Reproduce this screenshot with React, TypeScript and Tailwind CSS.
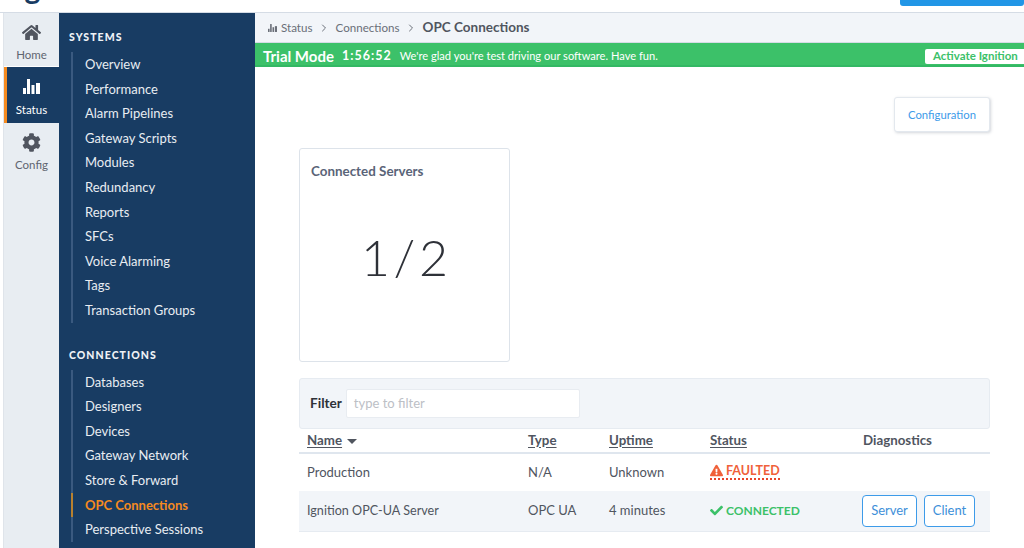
import { ChevronRight } from "lucide-react";
import { FaCheck, FaCog, FaExclamationTriangle, FaHome } from "react-icons/fa";

const systems = [
	"Overview",
	"Performance",
	"Alarm Pipelines",
	"Gateway Scripts",
	"Modules",
	"Redundancy",
	"Reports",
	"SFCs",
	"Voice Alarming",
	"Tags",
	"Transaction Groups",
];

const connections = [
	"Databases",
	"Designers",
	"Devices",
	"Gateway Network",
	"Store & Forward",
	"OPC Connections",
	"Perspective Sessions",
];

function StatusBars({ className }: { className?: string }) {
	return (
		<svg viewBox="0 0 17 15" className={className} fill="currentColor">
			<rect x="0" y="9" width="3" height="6" />
			<rect x="4" y="0" width="3" height="15" />
			<rect x="8.5" y="6" width="3" height="9" />
			<rect x="13" y="4" width="4" height="11" />
		</svg>
	);
}

function NavGroup({ title, items }: { title: string; items: string[] }) {
	return (
		<div>
			<p className="pl-[10px] text-[10.5px] font-black uppercase leading-[14px] tracking-[0.1em] text-[#eef2f6]">{title}</p>
			<ul className="mt-[8px] ml-[12px] border-l-2 border-[#3a5a80]">
				{items.map((item) => {
					const active = item === "OPC Connections";
					return (
						<li
							key={item}
							className={`-ml-[2px] h-[24.6px] border-l-2 pl-[12px] text-[13px] leading-[24.6px] ${
								active ? "border-[#b8812f] font-bold text-[#f58a1f]" : "border-transparent text-[#e8edf2]"
							}`}
						>
							{item}
						</li>
					);
				})}
			</ul>
		</div>
	);
}

export default function App() {
	return (
		<div className="flex h-[548px] w-[1024px] flex-col overflow-hidden bg-white font-['Lato','Noto_Sans',sans-serif] text-[#50555f]">
			<header className="flex h-[13px] shrink-0 justify-between overflow-hidden border-b border-[#d5dce5] bg-white">
				<span className="-mt-[28px] ml-[16px] text-[30px] font-bold leading-[30px] text-[#183c63]">Ignition</span>
				<div className="h-[6px] w-[124px] rounded-b-[3px] bg-[#2196e6]" />
			</header>

			<div className="flex min-h-0 flex-1">
				<aside className="ml-[3px] w-[56px] shrink-0 border-l border-[#dfe4ea] bg-[#e8edf2] text-center text-[11.5px]">
					<div className="flex h-[54px] flex-col items-center border-b border-white pt-[10px] text-[#5f6570]">
						<FaHome className="h-[19px] w-[19px] text-[#50555f]" />
						<span className="mt-[6px] leading-[14px]">Home</span>
					</div>
					<div className="flex h-[56px] flex-col items-center border-l-[3px] border-[#f58a1f] bg-[#183c63] pr-[3px] pt-[12px] text-white">
						<StatusBars className="h-[15px] w-[17px]" />
						<span className="mt-[9px] leading-[14px]">Status</span>
					</div>
					<div className="flex h-[54px] flex-col items-center pt-[10px] text-[#5f6570]">
						<FaCog className="h-[19px] w-[19px] text-[#50555f]" />
						<span className="mt-[6px] leading-[14px]">Config</span>
					</div>
				</aside>

				<nav className="flex w-[196px] shrink-0 flex-col gap-[25px] bg-[#183c63] pt-[17px]">
					<NavGroup title="Systems" items={systems} />
					<NavGroup title="Connections" items={connections} />
				</nav>

				<main className="min-w-0 flex-1">
					<div className="flex h-[30px] items-center border-b border-[#d5dce5] bg-[#f2f5f9] pl-[13px] text-[11.6px] text-[#6a6f78]">
						<StatusBars className="mr-[4px] h-[8px] w-[9px]" />
						<span>Status</span>
						<ChevronRight className="ml-[5px] mr-[6px] h-[12px] w-[12px]" strokeWidth={2} />
						<span>Connections</span>
						<ChevronRight className="ml-[5px] mr-[6px] h-[12px] w-[12px]" strokeWidth={2} />
						<span className="text-[13.5px] font-bold text-[#50555f]">OPC Connections</span>
					</div>

					<div className="flex h-[24px] items-center border-b-2 border-[#33b864] bg-[#3cc169] pl-[8px] pt-[4px] text-white">
						<span className="text-[15px] font-bold">Trial Mode</span>
						<span className="ml-[8px] text-[12.5px] font-bold tracking-[0.08em]">1:56:52</span>
						<span className="ml-[8px] text-[11.1px]">We're glad you're test driving our software. Have fun.</span>
						<span className="ml-auto flex h-[15px] w-[99px] items-center rounded-l-[2px] bg-white pl-[8px] text-[11.5px] font-bold text-[#3cc169]">
							Activate Ignition
						</span>
					</div>

					<div className="pl-[44px] pr-[34px]">
						<div className="flex justify-end pt-[30px]">
							<button className="h-[35px] w-[96px] rounded-[3px] border border-[#e3e8ee] bg-white pt-[1px] text-[11.3px] text-[#3d9be9] shadow-[1px_1px_3px_rgba(80,90,110,0.25)]">
								Configuration
							</button>
						</div>

						<section className="mt-[16px] h-[214px] w-[211px] rounded-[3px] border border-[#dde3ea] bg-white">
							<p className="pl-[11px] pt-[14px] text-[13.4px] font-bold leading-[16px] text-[#5a6478]">Connected Servers</p>
							<p className="mt-[48px] text-center text-[50px] font-light leading-[60px] text-[#2e3138] [word-spacing:-10px]">1 / 2</p>
						</section>

						<div className="mt-[16px] flex h-[51px] items-center rounded-[3px] border border-[#e6ebf1] bg-[#f2f5f9] pl-[10px]">
							<span className="text-[13.6px] font-bold text-[#2e3138]">Filter</span>
							<div className="ml-[4px] flex h-[29px] w-[234px] items-center rounded-[2px] border border-[#e8ecf1] bg-white pl-[7px] text-[13px] text-[#bcc0c6]">
								type to filter
							</div>
						</div>

						<table className="w-full table-fixed border-collapse text-[13px]">
							<thead>
								<tr className="h-[24px] border-b-2 border-[#dfe6ee] text-left text-[13.3px] font-bold">
									<th className="w-[221px] pl-[8px]">
										<span className="underline underline-offset-2">Name</span>
										<span className="ml-[5px] inline-block h-0 w-0 border-x-[5px] border-t-[5px] border-x-transparent border-t-[#50555f] align-middle" />
									</th>
									<th className="w-[81px] pl-[8px]">
										<span className="underline underline-offset-2">Type</span>
									</th>
									<th className="w-[101px] pl-[8px]">
										<span className="underline underline-offset-2">Uptime</span>
									</th>
									<th className="w-[153px] pl-[8px]">
										<span className="underline underline-offset-2">Status</span>
									</th>
									<th className="pl-[8px]">Diagnostics</th>
								</tr>
							</thead>
							<tbody>
								<tr className="h-[38px]">
									<td className="pl-[8px]">Production</td>
									<td className="pl-[8px]">N/A</td>
									<td className="pl-[8px]">Unknown</td>
									<td className="pl-[8px]">
										<span className="inline-flex items-center gap-[3px] border-b-2 border-dotted border-[#e8452c] text-[12.5px] font-bold leading-[15px] text-[#f0613a]">
											<FaExclamationTriangle className="h-[13px] w-[13px]" />
											FAULTED
										</span>
									</td>
									<td />
								</tr>
								<tr className="h-[40px] border-b border-[#e6ebf1] bg-[#f2f5f9]">
									<td className="pl-[8px] pt-[1px] text-[12.6px]">Ignition OPC-UA Server</td>
									<td className="pl-[8px]">OPC UA</td>
									<td className="pl-[8px]">4 minutes</td>
									<td className="pl-[8px]">
										<div className="flex items-center gap-[3px] text-[12px] font-bold text-[#3cc169]">
											<FaCheck className="h-[13px] w-[13px]" />
											CONNECTED
										</div>
									</td>
									<td className="pl-[7px]">
										<div className="flex gap-[7px]">
											<button className="h-[32px] w-[55px] rounded-[4px] border border-[#3d9be9] bg-white text-[13px] text-[#3d8fd9]">
												Server
											</button>
											<button className="h-[32px] w-[51px] rounded-[4px] border border-[#3d9be9] bg-white text-[13px] text-[#3d8fd9]">
												Client
											</button>
										</div>
									</td>
								</tr>
							</tbody>
						</table>
					</div>
				</main>
			</div>
		</div>
	);
}
